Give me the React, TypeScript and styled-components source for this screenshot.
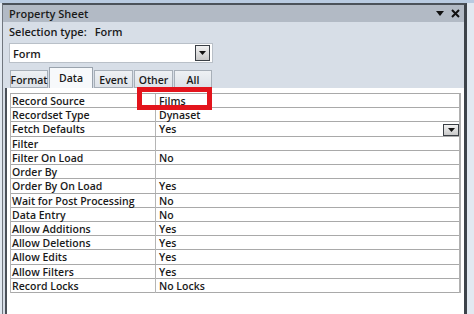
import React from "react";
import styled, { createGlobalStyle } from "styled-components";

const Global = createGlobalStyle`
  html, body { margin: 0; padding: 0; }
  body { background: #dfe7f0; font-family: "Open Sans", "Noto Sans", sans-serif; }
`;

const Page = styled.div`
  width: 474px;
  height: 314px;
  overflow: hidden;
  background: linear-gradient(#b9cbe1 0, #b9cbe1 3px, #e2e9f1 3px);
  padding: 3px 0 0 2px;
  box-sizing: border-box;
  display: flex;
  font-size: 10.5px;
  font-weight: 600;
  color: #1a1a1a;
`;

const Panel = styled.div`
  position: relative;
  width: 465px;
  height: 311px;
  box-sizing: border-box;
  border-top: 2px solid #4b525a;
  border-left: 1px solid #70767e;
  border-right: 3px solid #3d434a;
  background: #d7dee7;
  display: flex;
  flex-direction: column;
`;

const TitleBar = styled.div`
  height: 17px;
  background: #b2bac5;
  display: flex;
  align-items: center;
  padding: 0 4px 0 6px;
  font-size: 11px;
  flex-shrink: 0;
`;

const TitleText = styled.span`
  flex: 1;
`;

const TitleIcons = styled.div`
  display: flex;
  align-items: center;
  gap: 7px;
`;

const SelectionRow = styled.div`
  height: 18px;
  display: flex;
  align-items: center;
  padding-left: 6px;
  font-size: 11px;
  gap: 8px;
  flex-shrink: 0;
`;

const Combo = styled.div`
  margin: 3px 0 0 6px;
  width: 204px;
  height: 20px;
  box-sizing: border-box;
  background: #fff;
  border: 1px solid #b9c0c8;
  display: flex;
  align-items: center;
  justify-content: space-between;
  padding: 0 2px 0 3px;
  font-size: 11px;
  flex-shrink: 0;
`;

const DropButton = styled.div<{ $w: number; $h: number }>`
  width: ${(p) => p.$w}px;
  height: ${(p) => p.$h}px;
  box-sizing: border-box;
  border: 1px solid #3a3f45;
  background: linear-gradient(#f2f2f2, #c9c9c9);
  display: flex;
  align-items: center;
  justify-content: center;
`;

const TabStrip = styled.div`
  margin: 4px 0 0 7px;
  height: 21px;
  display: flex;
  align-items: flex-end;
  flex-shrink: 0;
`;

const Tab = styled.div<{ $w: number; $active?: boolean }>`
  width: ${(p) => p.$w}px;
  height: ${(p) => (p.$active ? 21 : 18)}px;
  box-sizing: border-box;
  margin-right: 1px;
  border: 1px solid ${(p) => (p.$active ? "#9aa3ad" : "#a7afb8")};
  border-bottom: ${(p) => (p.$active ? "none" : "1px solid #a7afb8")};
  background: ${(p) =>
    p.$active ? "#f7f9fb" : "linear-gradient(#eef1f4, #dde2e8)"};
  display: flex;
  align-items: ${(p) => (p.$active ? "flex-start" : "center")};
  padding-top: ${(p) => (p.$active ? 3 : 1)}px;
  justify-content: center;
  font-size: 10.5px;
  white-space: nowrap;
`;

const Content = styled.div`
  flex: 1;
  margin-left: 2px;
  background: #fff;
  border-left: 2px solid #4a5058;
  padding: 5px 3px 0 3px;
`;

const Grid = styled.div`
  border-top: 1px solid #a9a9a9;
  border-left: 1px solid #b5b5b5;
  border-right: 2px solid #b0b0b0;
`;

const Row = styled.div`
  display: grid;
  grid-template-columns: 144px 1fr;
  height: 14.22px;
  box-sizing: border-box;
  border-bottom: 1px solid #a9a9a9;
`;

const Cell = styled.div<{ $value?: boolean }>`
  display: flex;
  align-items: center;
  justify-content: space-between;
  padding-left: ${(p) => (p.$value ? 3 : 1)}px;
  padding-top: 1px;
  border-left: ${(p) => (p.$value ? "1px solid #b5b5b5" : "none")};
  white-space: nowrap;
  line-height: 13px;
`;

const Highlight = styled.div`
  position: absolute;
  left: 134px;
  top: 82px;
  width: 75px;
  height: 23px;
  box-sizing: border-box;
  border: 5px solid #e3141c;
  pointer-events: none;
`;

const Arrow = ({ w = 7, h = 4 }: { w?: number; h?: number }) => (
  <svg width={w} height={h} viewBox={`0 0 ${w} ${h}`}>
    <polygon points={`0,0 ${w},0 ${w / 2},${h}`} fill="#111" />
  </svg>
);

const rows: [string, string][] = [
  ["Record Source", "Films"],
  ["Recordset Type", "Dynaset"],
  ["Fetch Defaults", "Yes"],
  ["Filter", ""],
  ["Filter On Load", "No"],
  ["Order By", ""],
  ["Order By On Load", "Yes"],
  ["Wait for Post Processing", "No"],
  ["Data Entry", "No"],
  ["Allow Additions", "Yes"],
  ["Allow Deletions", "Yes"],
  ["Allow Edits", "Yes"],
  ["Allow Filters", "Yes"],
  ["Record Locks", "No Locks"],
];

const tabs: [string, number, boolean][] = [
  ["Format", 38, false],
  ["Data", 44, true],
  ["Event", 39, false],
  ["Other", 39, false],
  ["All", 38, false],
];

export default function App() {
  return (
    <Page>
      <Global />
      <Panel>
        <TitleBar>
          <TitleText>Property Sheet</TitleText>
          <TitleIcons>
            <Arrow w={8} h={5} />
            <svg width="9" height="9" viewBox="0 0 9 9">
              <path d="M1 1 L8 8 M8 1 L1 8" stroke="#111" strokeWidth="2" />
            </svg>
          </TitleIcons>
        </TitleBar>
        <SelectionRow>
          <span>Selection type:</span>
          <span>Form</span>
        </SelectionRow>
        <Combo>
          <span>Form</span>
          <DropButton $w={15} $h={16}>
            <Arrow w={7} h={4} />
          </DropButton>
        </Combo>
        <TabStrip>
          {tabs.map(([t, w, a]) => (
            <Tab key={t} $w={w} $active={a}>
              {t}
            </Tab>
          ))}
        </TabStrip>
        <Content>
          <Grid>
            {rows.map(([k, v]) => (
              <Row key={k}>
                <Cell>{k}</Cell>
                <Cell $value>
                  <span>{v}</span>
                  {k === "Fetch Defaults" && (
                    <DropButton $w={16} $h={12}>
                      <Arrow w={7} h={4} />
                    </DropButton>
                  )}
                </Cell>
              </Row>
            ))}
          </Grid>
        </Content>
        <Highlight />
      </Panel>
    </Page>
  );
}
